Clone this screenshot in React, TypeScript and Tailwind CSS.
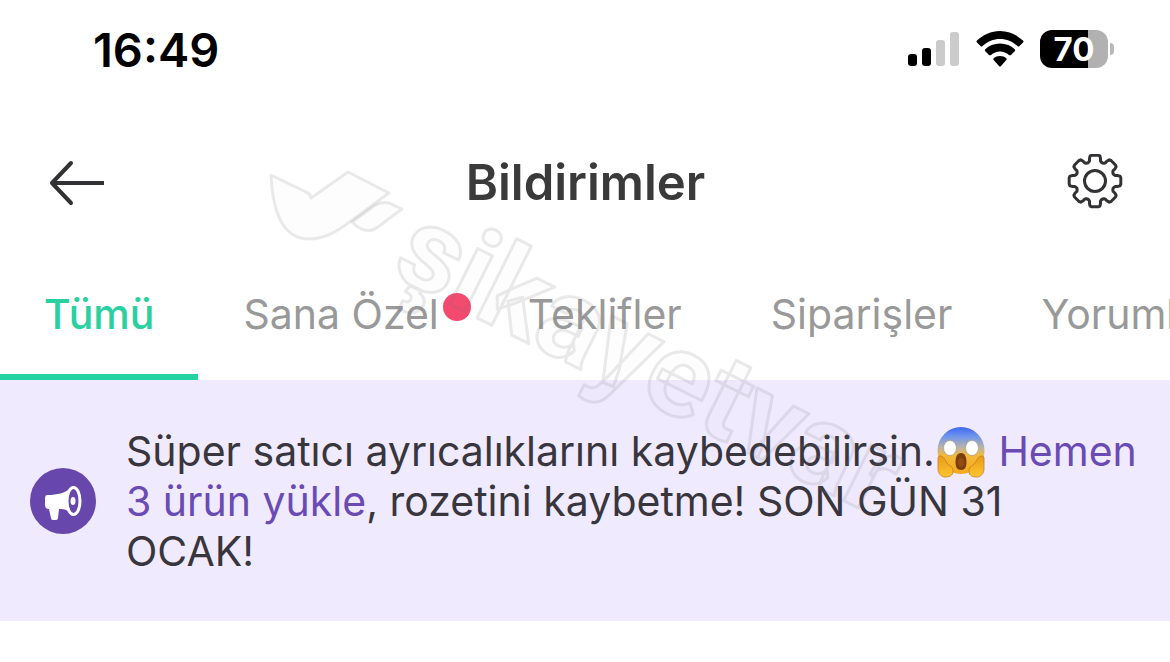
import React from 'react';

const tabs = [
    { label: 'Tümü', active: true },
    { label: 'Sana Özel', unread: true },
    { label: 'Teklifler' },
    { label: 'Siparişler' },
    { label: 'Yorumlar' },
];

// One tooth of the settings gear as [angle offset in degrees, radius]
const tooth = [
    [-15, 21],
    [-14, 23],
    [-11, 25.5],
    [-7, 26],
    [7, 26],
    [11, 25.5],
    [14, 23],
    [15, 21],
    [18, 20],
    [22.5, 19.5],
    [27, 20],
];

const gearPoints = Array.from({ length: 8 }, (_, i) =>
    tooth.map(([offset, radius]) => {
        const angle = ((i * 45 + offset) * Math.PI) / 180;
        return `${(28 + radius * Math.sin(angle)).toFixed(2)},${(27 - radius * Math.cos(angle)).toFixed(2)}`;
    }).join(' ')
).join(' ');

const BackIcon = () => (
    <svg className="w-14 h-12" viewBox="0 0 56 48" fill="none" stroke="#323234" strokeWidth="4" aria-hidden="true">
        <path d="M56 25H5" />
        <path d="M23 5L4 25l19 20" strokeLinecap="round" strokeLinejoin="round" />
    </svg>
);

const GearIcon = () => (
    <svg className="size-14" viewBox="0 0 56 56" fill="none" stroke="#323234" strokeWidth="3" strokeLinejoin="round" aria-hidden="true">
        <polygon points={gearPoints} />
        <circle cx="28" cy="27" r="10.5" />
    </svg>
);

const SignalIcon = () => (
    <svg className="w-13 h-9" viewBox="0 0 52 36" aria-hidden="true">
        <rect x="0" y="23" width="9" height="12" rx="3" />
        <rect x="14" y="17" width="9" height="18" rx="3" />
        <rect x="28" y="9" width="9" height="26" rx="3" fill="#cbcbcb" />
        <rect x="42" y="1" width="9" height="34" rx="3" fill="#cbcbcb" />
    </svg>
);

const WifiIcon = () => (
    <svg className="w-12 h-9" viewBox="0 0 48 36" aria-hidden="true">
        <path d="M24 0C15 0 7 4 1 9.500Q0 10.500 1 11.500L4.500 15Q5.500 16 6.500 15C11.500 10.500 17.500 8 24 8s12.500 2.500 17.500 7q1 1 2 0L47 11.500q1-1 0-2C41 4 33 0 24 0z" />
        <path d="M24 12.500c-6 0-11 2.300-14.700 5.700q-1 1 0 2l3.700 3.700q1 .9 2 0c2.500-2.300 5.600-3.500 9-3.500s6.500 1.200 9 3.500q1 .9 2 0l3.700-3.700q1-1 0-2C35 14.800 30 12.500 24 12.500z" />
        <path d="M24 25c-2.600 0-4.600.8-6.300 2.200q-1 .9 0 1.900l5.300 5.800q1 1 2 0l5.300-5.800q1-1 0-1.900C28.600 25.800 26.600 25 24 25z" />
    </svg>
);

const Battery = () => (
    <div className="flex items-center gap-0.5">
        <div className="flex items-center justify-center w-17 h-[38px] rounded-xl bg-linear-to-r from-black from-70% to-[#b1b1b1] to-70% text-white text-[33px] leading-none font-bold">
            70
        </div>
        <div className="w-1 h-3 rounded-r-full bg-[#b9b9b9]" />
    </div>
);

const MegaphoneIcon = () => (
    <svg className="size-[66px] shrink-0" viewBox="0 0 66 66" aria-hidden="true">
        <circle cx="33" cy="33" r="33" fill="#6847ad" />
        <path d="M18 27c9 0 17-2 23-7l3 27c-6-5-9-6-15-6l-1 9q0 2-2 2h-3q-2 0-2-2l-2-9c-3 0-4-2-4-5v-4c0-3 0-5 3-5z" fill="#fff" />
        <ellipse cx="43.500" cy="33" rx="6.500" ry="13.500" fill="#6847ad" stroke="#fff" strokeWidth="3" />
        <ellipse cx="43" cy="33" rx="2.500" ry="4" fill="#fff" />
    </svg>
);

const ScreamEmoji = () => (
    <svg className="inline-block w-13 h-13 -my-2 align-[-4px]" viewBox="0 0 52 52" role="img" aria-label="😱">
        <defs>
            <linearGradient id="face" x1="0" y1="0" x2="0" y2="1">
                <stop offset="0" stopColor="#3f67f2" />
                <stop offset="0.2" stopColor="#6f95ec" />
                <stop offset="0.42" stopColor="#b3b2ae" />
                <stop offset="0.6" stopColor="#f2b93c" />
                <stop offset="1" stopColor="#f5a81c" />
            </linearGradient>
            <linearGradient id="hand" x1="0" y1="0" x2="0" y2="1">
                <stop offset="0" stopColor="#e99a1c" />
                <stop offset="1" stopColor="#fdc62e" />
            </linearGradient>
        </defs>
        <circle cx="26" cy="24.500" r="23.500" fill="url(#face)" />
        <ellipse cx="15" cy="22" rx="6.500" ry="7.500" fill="#fff" stroke="#a59b87" strokeWidth="0.700" />
        <ellipse cx="37" cy="22" rx="6.500" ry="7.500" fill="#fff" stroke="#a59b87" strokeWidth="0.700" />
        <path d="M26 27c4 0 5.500 4 5.500 9S30 44 26 44s-5.500-3-5.500-8S22 27 26 27z" fill="#7c3d0c" />
        <path d="M26 32c2 0 3 2 3 5s-1 4-3 4-3-1-3-4 1-5 3-5z" fill="#964b12" />
        <path d="M5 30c4 0 5 4 7 7s6 3 6 8-4 6-8 6-7-4-7-8V32q0-2 2-2z" fill="url(#hand)" stroke="#c97d14" strokeWidth="0.800" />
        <path d="M47 30c-4 0-5 4-7 7s-6 3-6 8 4 6 8 6 7-4 7-8V32q0-2-2-2z" fill="url(#hand)" stroke="#c97d14" strokeWidth="0.800" />
    </svg>
);

const Watermark = () => (
    <svg
        className="absolute left-0 top-0 w-[1170px] h-[662px] pointer-events-none"
        viewBox="0 0 1170 662"
        fill="#808080"
        fillOpacity="0.02"
        stroke="#707070"
        strokeOpacity="0.15"
        strokeWidth="3"
        strokeLinejoin="round"
        aria-hidden="true"
    >
        <path d="M271 175L306 192Q311 194 311 198L348 172L389 193L351 221C334 234 322 239 309 239C287 239 273 220 271 175z" />
        <path d="M352 222L374 206Q381 201 389 203L402 209L378 227Q366 236 352 222z" />
        <text x="389" y="274" transform="rotate(26.5 389 274)" fontFamily="Roboto, sans-serif" fontSize="118" fontWeight="700">
            şikayetvar
        </text>
    </svg>
);

const App: React.FC = () => {
    return (
        <div className="relative min-h-screen overflow-hidden bg-white text-[#38363c] font-[Inter,'Liberation_Sans',sans-serif]">
            <div className="flex items-center justify-between h-[98px] pl-[93px] pr-14">
                <span className="text-[47px] leading-none font-semibold text-black">16:49</span>
                <div className="flex items-center gap-4">
                    <SignalIcon />
                    <WifiIcon />
                    <Battery />
                </div>
            </div>

            <header className="grid grid-cols-[1fr_auto_1fr] items-center h-42 pl-12 pr-[47px]">
                <button type="button" aria-label="Geri" className="justify-self-start">
                    <BackIcon />
                </button>
                <h1 className="text-[49px] leading-none font-semibold text-[#3a3a3a]">Bildirimler</h1>
                <button type="button" aria-label="Ayarlar" className="justify-self-end">
                    <GearIcon />
                </button>
            </header>

            <nav className="flex gap-px h-[114px] overflow-hidden">
                {tabs.map((tab) => (
                    <button
                        key={tab.label}
                        type="button"
                        className={`relative shrink-0 px-11 pb-3 border-b-6 text-[41px] leading-none ${
                            tab.active ? 'border-[#25d3a0] text-[#2bd0a0] font-medium' : 'border-transparent text-[#999]'
                        }`}
                    >
                        {tab.label}
                        {tab.unread && <span className="absolute right-3 top-[27px] size-7 rounded-full bg-[#f54a70]" />}
                    </button>
                ))}
            </nav>

            <section className="flex items-center gap-[30px] pl-[30px] pr-4 pt-[46px] pb-[45px] bg-[#f0eaff]">
                <MegaphoneIcon />
                <p className="text-[41px] leading-[50px]">
                    Süper satıcı ayrıcalıklarını kaybedebilirsin.
                    <ScreamEmoji />{' '}
                    <a href="#" className="text-[#6a4bb4]">
                        Hemen 3 ürün yükle
                    </a>
                    , rozetini kaybetme! SON GÜN 31
                    <br />
                    OCAK!
                </p>
            </section>

            <Watermark />
        </div>
    );
};

export default App;
